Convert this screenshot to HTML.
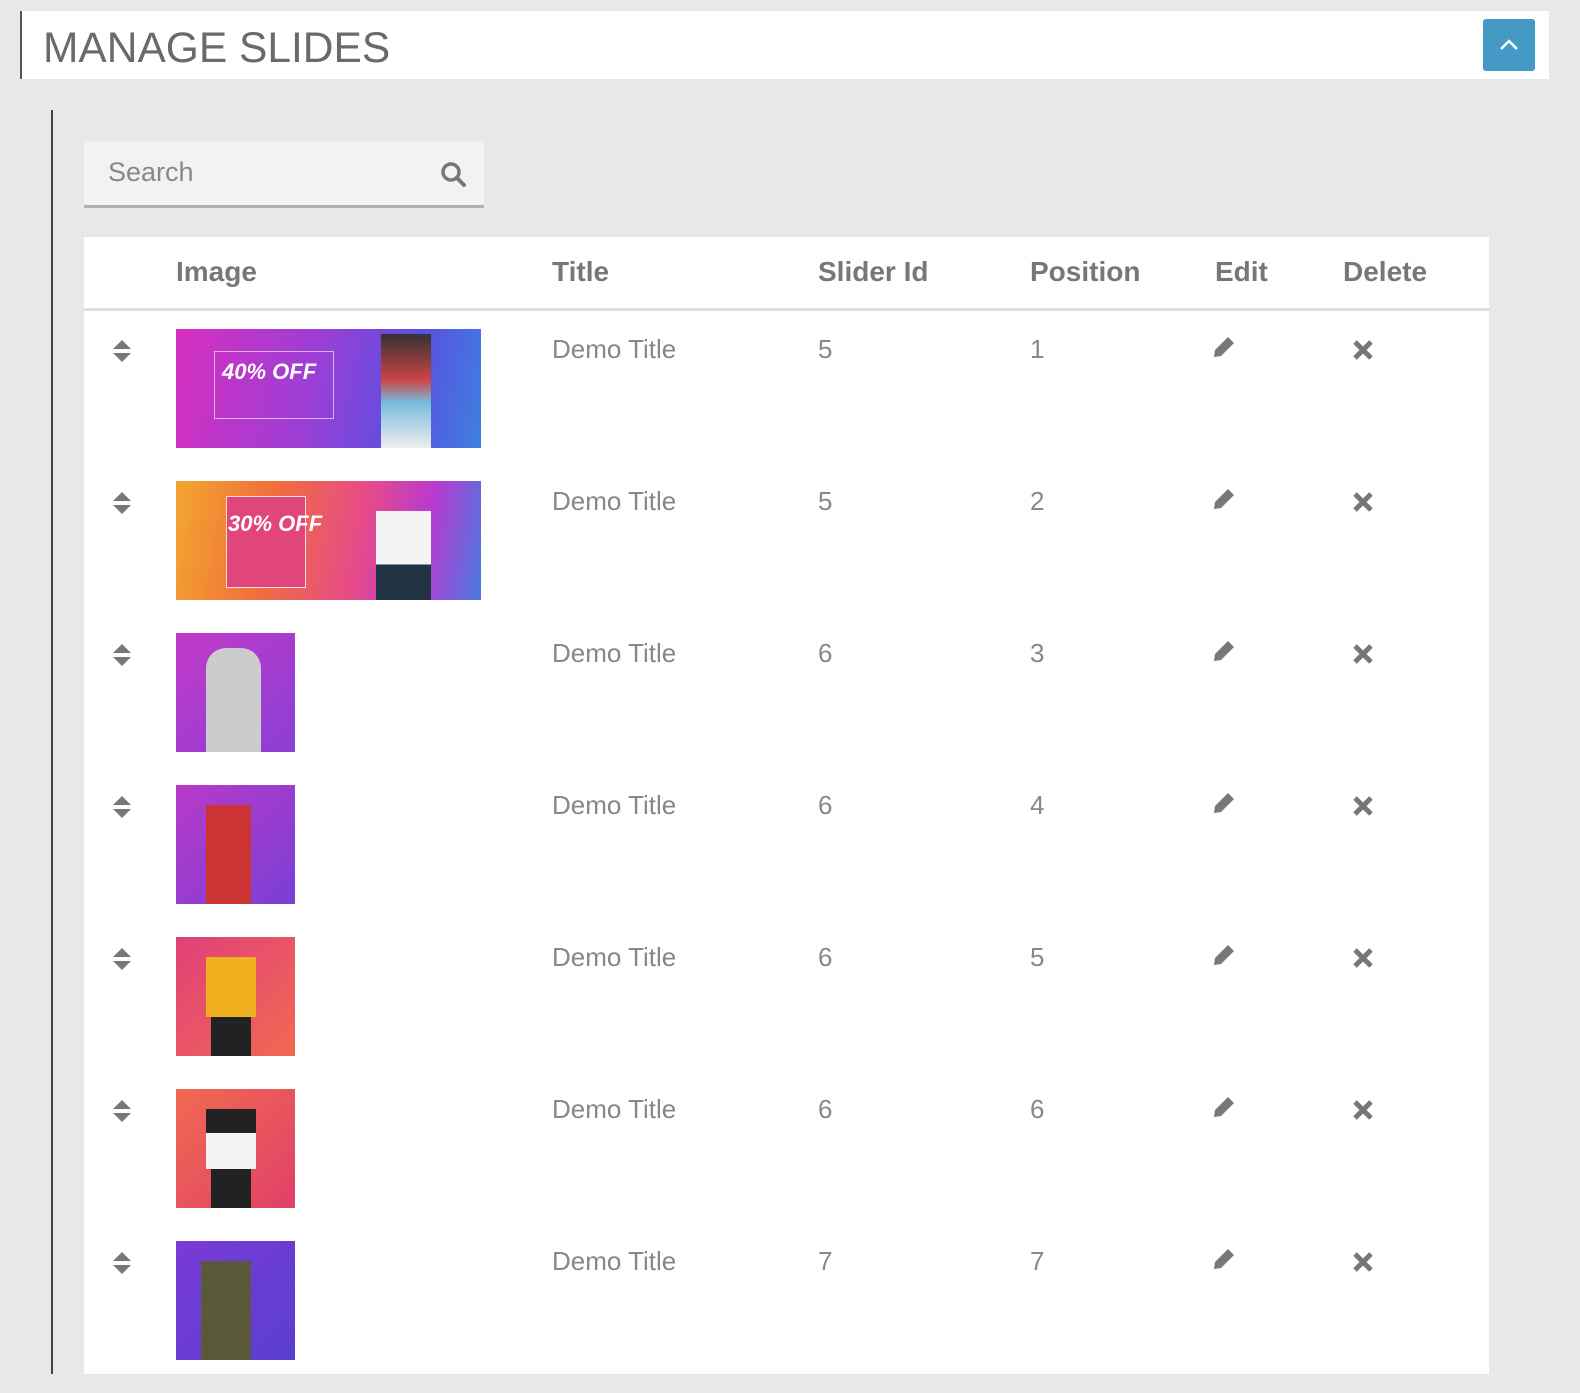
<!DOCTYPE html>
<html><head><meta charset="utf-8"><style>
*{margin:0;padding:0;box-sizing:border-box}
body{width:1580px;height:1374px;background:#e8e8ea;font-family:"Liberation Sans",sans-serif;position:relative;overflow:hidden}
.hdr{position:absolute;left:20px;top:11px;width:1529px;height:68px;background:#fff;border-left:2px solid #555}
.hdr h1{position:absolute;left:21px;top:14px;font-size:42.5px;font-weight:normal;color:#6a6a6a}
.btn{position:absolute;left:1461px;top:8px;width:52px;height:52px;background:#4499c5;border-radius:3px}
.vline{position:absolute;left:51px;top:110px;width:2px;height:1264px;background:#444}
.search{position:absolute;left:84px;top:141px;width:400px;height:67px;background:#f2f2f2;border-bottom:3px solid #b0b0b0}
.search span{position:absolute;left:24px;top:16px;font-size:27px;color:#888}
.tbl{position:absolute;left:84px;top:237px;width:1405px;height:1137px;background:#fff}
.th{position:absolute;top:19px;font-size:28px;font-weight:bold;color:#777}
.hl{position:absolute;left:0;top:71px;width:1405px;height:3px;background:#ddd}
.row{position:absolute;left:0;width:1405px;height:152px}
.td{position:absolute;top:5px;font-size:26px;color:#888}
.img{position:absolute;left:92px;top:0;height:119px;overflow:hidden}
.sort{position:absolute;left:28px;top:10px}
.ed{position:absolute;left:1127px;top:5px}
.dl{position:absolute;left:1268px;top:10px}
</style></head><body>
<div class="hdr"><h1>MANAGE SLIDES</h1>
<div class="btn"><svg width="52" height="52"><path d="M18 30 L26 22 L34 30" stroke="#fff" stroke-width="2.5" fill="none"/></svg></div></div>
<div class="vline"></div>
<div class="search"><span>Search</span>
<svg style="position:absolute;left:356px;top:20px" width="28" height="28"><circle cx="11" cy="11" r="8" stroke="#777" stroke-width="3.5" fill="none"/><path d="M17 17 L24 24" stroke="#777" stroke-width="4" stroke-linecap="round"/></svg></div>
<div class="tbl">
<div class="th" style="left:92px">Image</div>
<div class="th" style="left:468px">Title</div>
<div class="th" style="left:734px">Slider Id</div>
<div class="th" style="left:946px">Position</div>
<div class="th" style="left:1131px">Edit</div>
<div class="th" style="left:1259px">Delete</div>
<div class="hl"></div>

<div class="row" style="top:92px">
<svg class="sort" width="20" height="26"><path d="M10 1 L19 10 H1Z M1 14 H19 L10 23Z" fill="#777"/></svg>
<div class="img" style="width:305px;background:linear-gradient(100deg,#d62fbf 0%,#9b3fd6 45%,#5a4fe0 75%,#3f7fe0 100%)"><div style="position:absolute;left:38px;top:22px;width:120px;height:68px;border:1px solid #fff9"></div><div style="position:absolute;left:46px;top:30px;color:#fff;font-weight:bold;font-style:italic;font-size:22px">40% OFF</div><div style="position:absolute;left:205px;top:5px;width:50px;height:114px;background:linear-gradient(#333,#c44 40%,#7bd 60%,#eee)"></div></div>
<div class="td" style="left:468px">Demo Title</div><div class="td" style="left:734px">5</div><div class="td" style="left:946px">1</div>
<svg class="ed" width="26" height="26"><path d="M3 23 L4 16 L17 3 L23 9 L10 22Z" fill="#777"/></svg>
<svg class="dl" width="22" height="22"><path d="M3 3 L19 19 M19 3 L3 19" stroke="#777" stroke-width="5"/></svg></div>

<div class="row" style="top:244px">
<svg class="sort" width="20" height="26"><path d="M10 1 L19 10 H1Z M1 14 H19 L10 23Z" fill="#777"/></svg>
<div class="img" style="width:305px;background:linear-gradient(100deg,#f3a630 0%,#f0703a 30%,#e64a8a 60%,#b83ad0 80%,#4a7ae0 100%)"><div style="position:absolute;left:50px;top:15px;width:80px;height:92px;background:#e0457c;border:1px solid #fdd"></div><div style="position:absolute;left:52px;top:30px;color:#fff;font-weight:bold;font-style:italic;font-size:22px">30% OFF</div><div style="position:absolute;left:200px;top:30px;width:55px;height:89px;background:linear-gradient(#f4f4f4 60%,#234 60%)"></div></div>
<div class="td" style="left:468px">Demo Title</div><div class="td" style="left:734px">5</div><div class="td" style="left:946px">2</div>
<svg class="ed" width="26" height="26"><path d="M3 23 L4 16 L17 3 L23 9 L10 22Z" fill="#777"/></svg>
<svg class="dl" width="22" height="22"><path d="M3 3 L19 19 M19 3 L3 19" stroke="#777" stroke-width="5"/></svg></div>

<div class="row" style="top:396px">
<svg class="sort" width="20" height="26"><path d="M10 1 L19 10 H1Z M1 14 H19 L10 23Z" fill="#777"/></svg>
<div class="img" style="width:119px;background:linear-gradient(135deg,#c23ac8,#8a3fd6)"><div style="position:absolute;left:30px;top:15px;width:55px;height:104px;background:#ccc;border-radius:20px 20px 0 0"></div></div>
<div class="td" style="left:468px">Demo Title</div><div class="td" style="left:734px">6</div><div class="td" style="left:946px">3</div>
<svg class="ed" width="26" height="26"><path d="M3 23 L4 16 L17 3 L23 9 L10 22Z" fill="#777"/></svg>
<svg class="dl" width="22" height="22"><path d="M3 3 L19 19 M19 3 L3 19" stroke="#777" stroke-width="5"/></svg></div>

<div class="row" style="top:548px">
<svg class="sort" width="20" height="26"><path d="M10 1 L19 10 H1Z M1 14 H19 L10 23Z" fill="#777"/></svg>
<div class="img" style="width:119px;background:linear-gradient(135deg,#b83ac8,#7a3fd6)"><div style="position:absolute;left:30px;top:20px;width:45px;height:99px;background:#c33"></div></div>
<div class="td" style="left:468px">Demo Title</div><div class="td" style="left:734px">6</div><div class="td" style="left:946px">4</div>
<svg class="ed" width="26" height="26"><path d="M3 23 L4 16 L17 3 L23 9 L10 22Z" fill="#777"/></svg>
<svg class="dl" width="22" height="22"><path d="M3 3 L19 19 M19 3 L3 19" stroke="#777" stroke-width="5"/></svg></div>

<div class="row" style="top:700px">
<svg class="sort" width="20" height="26"><path d="M10 1 L19 10 H1Z M1 14 H19 L10 23Z" fill="#777"/></svg>
<div class="img" style="width:119px;background:linear-gradient(135deg,#e0407a,#f06a50)"><div style="position:absolute;left:30px;top:20px;width:50px;height:60px;background:#f0b020"></div><div style="position:absolute;left:35px;top:80px;width:40px;height:39px;background:#222"></div></div>
<div class="td" style="left:468px">Demo Title</div><div class="td" style="left:734px">6</div><div class="td" style="left:946px">5</div>
<svg class="ed" width="26" height="26"><path d="M3 23 L4 16 L17 3 L23 9 L10 22Z" fill="#777"/></svg>
<svg class="dl" width="22" height="22"><path d="M3 3 L19 19 M19 3 L3 19" stroke="#777" stroke-width="5"/></svg></div>

<div class="row" style="top:852px">
<svg class="sort" width="20" height="26"><path d="M10 1 L19 10 H1Z M1 14 H19 L10 23Z" fill="#777"/></svg>
<div class="img" style="width:119px;background:linear-gradient(135deg,#f06a50,#e0406a)"><div style="position:absolute;left:30px;top:20px;width:50px;height:60px;background:linear-gradient(#222 40%,#f4f4f4 40%)"></div><div style="position:absolute;left:35px;top:80px;width:40px;height:39px;background:#222"></div></div>
<div class="td" style="left:468px">Demo Title</div><div class="td" style="left:734px">6</div><div class="td" style="left:946px">6</div>
<svg class="ed" width="26" height="26"><path d="M3 23 L4 16 L17 3 L23 9 L10 22Z" fill="#777"/></svg>
<svg class="dl" width="22" height="22"><path d="M3 3 L19 19 M19 3 L3 19" stroke="#777" stroke-width="5"/></svg></div>

<div class="row" style="top:1004px">
<svg class="sort" width="20" height="26"><path d="M10 1 L19 10 H1Z M1 14 H19 L10 23Z" fill="#777"/></svg>
<div class="img" style="width:119px;background:linear-gradient(135deg,#7a3ad8,#5a3fd0)"><div style="position:absolute;left:25px;top:20px;width:50px;height:99px;background:#5a5a3a"></div></div>
<div class="td" style="left:468px">Demo Title</div><div class="td" style="left:734px">7</div><div class="td" style="left:946px">7</div>
<svg class="ed" width="26" height="26"><path d="M3 23 L4 16 L17 3 L23 9 L10 22Z" fill="#777"/></svg>
<svg class="dl" width="22" height="22"><path d="M3 3 L19 19 M19 3 L3 19" stroke="#777" stroke-width="5"/></svg></div>
</div>
</body></html>
